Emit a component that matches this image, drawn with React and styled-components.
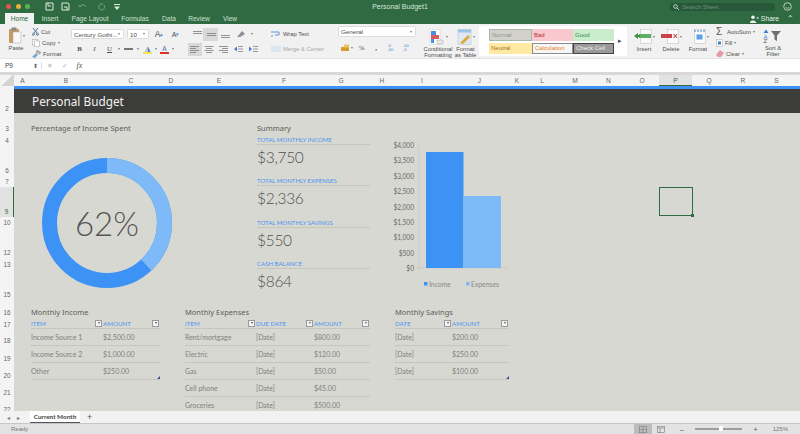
import React from "react";
import styled, { createGlobalStyle } from "styled-components";

const columns = [
  ["A", 17], ["B", 70], ["C", 60], ["D", 20], ["E", 76], ["F", 54], ["G", 60], ["H", 22], ["I", 58], ["J", 57],
  ["K", 18], ["L", 32], ["M", 34], ["N", 33], ["O", 34], ["P", 33], ["Q", 34], ["R", 34], ["S", 33],
];

const rows = [
  ["", 15], ["2", 14], ["", 7], ["3", 12], ["4", 12], ["", 18], ["6", 12], ["7", 11], ["9", 30], ["10", 11],
  ["", 18], ["12", 12], ["13", 12], ["", 18], ["15", 12], ["", 6], ["16", 12], ["17", 12], ["18", 20], ["19", 17], ["20", 17], ["21", 17], ["22", 17],
];

const summary = [
  ["TOTAL MONTHLY INCOME", "$3,750"],
  ["TOTAL MONTHLY EXPENSES", "$2,336"],
  ["TOTAL MONTHLY SAVINGS", "$550"],
  ["CASH BALANCE", "$864"],
];

const tables = [
  {
    title: "Monthly Income", left: 0, width: 129,
    cols: [["ITEM", 72], ["AMOUNT", 57]],
    data: [["Income Source 1", "$2,500.00"], ["Income Source 2", "$1,000.00"], ["Other", "$250.00"]],
    corner: true,
  },
  {
    title: "Monthly Expenses", left: 25, width: 185,
    cols: [["ITEM", 71], ["DUE DATE", 58], ["AMOUNT", 56]],
    data: [
      ["Rent/mortgage", "[Date]", "$800.00"], ["Electric", "[Date]", "$120.00"], ["Gas", "[Date]", "$50.00"],
      ["Cell phone", "[Date]", "$45.00"], ["Groceries", "[Date]", "$500.00"],
    ],
  },
  {
    title: "Monthly Savings", left: 25, width: 114,
    cols: [["DATE", 57], ["AMOUNT", 57]],
    data: [["[Date]", "$200.00"], ["[Date]", "$250.00"], ["[Date]", "$100.00"]],
    corner: true,
  },
];

const Donut = () => (
  <svg width="132" height="132" viewBox="0 0 132 132">
    <circle cx="66" cy="66" r="57.5" fill="none" stroke="#3d92f5" strokeWidth="15" />
    <circle
      cx="66" cy="66" r="57.5" fill="none" stroke="#7ebaf8" strokeWidth="15"
      strokeDasharray={`${2 * Math.PI * 57.5 * 0.38} 400`} transform="rotate(-90 66 66)"
    />
  </svg>
);

const BarChart = () => (
  <svg width="130" height="175" viewBox="0 0 130 175">
    {["$4,000", "$3,500", "$3,000", "$2,500", "$2,000", "$1,500", "$1,000", "$500", "$0"].map((t, i) => (
      <text key={t} x="24" y={14 + i * 15.4} textAnchor="end" fontSize="6.6" fontFamily="Lato, sans-serif" fill="#6a6a67">{t}</text>
    ))}
    <line x1="29" y1="11" x2="29" y2="134" stroke="#c4c4bf" strokeWidth="0.6" />
    <line x1="26" y1="134" x2="118" y2="134" stroke="#c4c4bf" strokeWidth="0.6" />
    <rect x="36" y="18" width="37.5" height="116" fill="#3d92f5" />
    <rect x="73.5" y="62" width="37.5" height="72" fill="#7ebaf8" />
    <rect x="34" y="148" width="3.5" height="3.5" fill="#3d92f5" />
    <text x="39" y="152.5" fontSize="6.8" fontFamily="Lato, sans-serif" fill="#8a8a86">Income</text>
    <rect x="76" y="148" width="3.5" height="3.5" fill="#7ebaf8" />
    <text x="81" y="152.5" fontSize="6.8" fontFamily="Lato, sans-serif" fill="#8a8a86">Expenses</text>
  </svg>
);

const Paste = () => (
  <svg width="14" height="17" viewBox="0 0 14 17">
    <rect x="1" y="2" width="10" height="14" rx="1" fill="#c59b63" />
    <rect x="3.5" y="0.5" width="5" height="3" fill="#8a8a8a" />
    <rect x="5" y="5" width="8" height="11" fill="#f8f8f8" stroke="#aaa" strokeWidth="0.5" />
  </svg>
);

const Cut = () => (
  <svg width="7" height="8" viewBox="0 0 7 8" stroke="#4c6f99" strokeWidth="1" fill="none">
    <path d="M1 0l4 5M6 0L2 5" />
    <circle cx="1.5" cy="6.3" r="1" />
    <circle cx="5.5" cy="6.3" r="1" />
  </svg>
);

const Copy = () => (
  <svg width="8" height="8" viewBox="0 0 8 8" fill="#fff" stroke="#aaa" strokeWidth="0.6">
    <rect x="0.5" y="0.5" width="5" height="5.5" />
    <rect x="2.5" y="2" width="5" height="5.5" />
  </svg>
);

const Brush = () => (
  <svg width="9" height="8" viewBox="0 0 9 8">
    <path d="M0 7l4-4 2 2-3 3z" fill="#7ba7d0" />
    <rect x="4" y="0.5" width="5" height="3" fill="#aaa" transform="rotate(30 6 2)" />
  </svg>
);

const Lines = ({ kind }) => {
  const sets = {
    top: [[1, 1, 9], [1, 3, 9]],
    mid: [[1, 3, 9], [1, 5, 9]],
    bottom: [[1, 5, 9], [1, 7, 9]],
    left: [[0, 1, 9], [0, 3, 6], [0, 5, 9], [0, 7, 6]],
    center: [[0.5, 1, 9], [2, 3, 6], [0.5, 5, 9], [2, 7, 6]],
    right: [[1, 1, 9], [4, 3, 6], [1, 5, 9], [4, 7, 6]],
  };
  return (
    <svg width="10" height="8" viewBox="0 0 10 8">
      {sets[kind].map(([x, y, w]) => <rect key={y} x={x} y={y} width={w} height="0.9" fill="#888" />)}
    </svg>
  );
};

const Indent = ({ flip }) => (
  <svg width="10" height="8" viewBox="0 0 10 8">
    <path d={flip ? "M4 4l-3-2.5v5z" : "M1 4l3-2.5v5z"} fill="#3d7fd0" />
    <rect x="5" y="1" width="5" height="1" fill="#999" />
    <rect x="5" y="3.5" width="5" height="1" fill="#999" />
    <rect x="5" y="6" width="5" height="1" fill="#999" />
  </svg>
);

const CellsIcon = ({ kind }) => (
  <svg width="18" height="15" viewBox="0 0 18 15">
    <rect x="6.5" y="0.5" width="11" height="14" fill="#fafafa" stroke="#c4c4c4" strokeWidth="0.6" />
    {kind === "insert" && <><rect x="5" y="5" width="12" height="4" fill="#62ad64" /><path d="M0 7l4-3v6z" fill="#3f9143" /><rect x="3" y="6" width="3" height="2" fill="#3f9143" /></>}
    {kind === "delete" && <><rect x="0" y="5" width="11" height="4" fill="#c9434a" /><path d="M12.5 5l3.5 4M16 5l-3.5 4" stroke="#c9434a" strokeWidth="1.1" /></>}
    {kind === "format" && <><rect x="8.5" y="5.5" width="6" height="5" fill="#5aa0ea" /><path d="M6 2h11" stroke="#3d7fd0" strokeWidth="1" strokeDasharray="2 1" /></>}
  </svg>
);

const CondIcon = () => (
  <svg width="16" height="16" viewBox="0 0 16 16">
    <rect x="1" y="0.5" width="10" height="15" fill="#fff" stroke="#ccc" strokeWidth="0.5" />
    <rect x="2" y="2" width="5" height="4" fill="#4b8fdc" />
    <rect x="2" y="6" width="8" height="4" fill="#dd5a5e" />
    <rect x="2" y="10" width="3" height="4" fill="#4b8fdc" />
    <path d="M8 11h6v4H8z" fill="#e8e8e8" stroke="#999" strokeWidth="0.4" />
  </svg>
);

const TableIcon = () => (
  <svg width="15" height="16" viewBox="0 0 15 16">
    <rect x="1" y="0.5" width="13" height="15" fill="#dfe9f3" stroke="#bbb" strokeWidth="0.5" />
    <rect x="1" y="0.5" width="13" height="3" fill="#9fc3e6" />
    <path d="M3 14l8-8 2 2-7 7z" fill="#e0a83a" />
  </svg>
);

const SortIcon = () => (
  <svg width="20" height="14" viewBox="0 0 20 14">
    <path d="M3 0.5L5.5 4h-5z" fill="#3d7fd0" />
    <text x="0.5" y="9.5" fontSize="6" fontFamily="Liberation Sans" fill="#3d7fd0">A</text>
    <text x="0.5" y="14" fontSize="6" fontFamily="Liberation Sans" fill="#555">Z</text>
    <path d="M8 2h10l-4 4.5V12l-2.5-1.5v-4z" fill="#6f6f6f" />
  </svg>
);

const App = () => (
  <>
    <GlobalStyle />
    <Window>
      <TitleBar>
        <Lights>
          <Light $c="#e8504b" />
          <Light $c="#e8b13a" />
          <Light $c="#53b848" />
        </Lights>
        <QuickIcons>
          <svg width="9" height="9" viewBox="0 0 9 9" fill="none" stroke="#dfe9e2" strokeWidth="1"><path d="M1 1h7v7H1zM3 1v3h3" /></svg>
          <svg width="9" height="9" viewBox="0 0 9 9" fill="none" stroke="#dfe9e2" strokeWidth="1"><path d="M1 1h6l1 1v6H1zM3 5h3v3" /></svg>
          <svg width="14" height="8" viewBox="0 0 14 8" fill="none" stroke="#7f9f8a" strokeWidth="1"><path d="M1 2l2 2 2-2M3 4c1-3 5-3 6 0" /></svg>
          <svg width="8" height="8" viewBox="0 0 8 8" fill="none" stroke="#7f9f8a" strokeWidth="1"><path d="M6 2a3 3 0 1 1-3-1h2" /></svg>
          <svg width="8" height="8" viewBox="0 0 8 8" fill="#dfe9e2"><path d="M1 1h6v1H1zM1 3.5h6L4 7z" /></svg>
        </QuickIcons>
        <DocTitle>Personal Budget1</DocTitle>
        <Search>
          <svg width="6" height="6" viewBox="0 0 6 6" fill="none" stroke="#cfe0d4" strokeWidth="0.9"><circle cx="2.5" cy="2.5" r="1.8" /><path d="M4 4l2 2" /></svg>
          Search Sheet
        </Search>
        <Smiley>
          <svg width="9" height="9" viewBox="0 0 9 9" fill="none" stroke="#dfe9e2" strokeWidth="0.8"><circle cx="4.5" cy="4.5" r="3.8" /><path d="M2.7 5.3c1 1.2 2.6 1.2 3.6 0" /></svg>
        </Smiley>
      </TitleBar>
      <TabRow>
        <Tab $active $w={29}>Home</Tab>
        <Tab $w={32}>Insert</Tab>
        <Tab $w={48}>Page Layout</Tab>
        <Tab $w={42}>Formulas</Tab>
        <Tab $w={26}>Data</Tab>
        <Tab $w={34}>Review</Tab>
        <Tab $w={28}>View</Tab>
        <Share>
          <svg width="9" height="8" viewBox="0 0 9 8" fill="#eef4f0"><circle cx="3" cy="2.2" r="1.8" /><path d="M0 8c0-3 6-3 6 0zM6.5 3h2.5M7.7 1.8v2.4" stroke="#eef4f0" strokeWidth="0.6" /></svg>
          Share
          <ShareCaret>⌃</ShareCaret>
        </Share>
      </TabRow>

      <Ribbon>
        <Group $w={27}>
          <BigBtn><IconLine><Paste /><Caret /></IconLine><span>Paste</span></BigBtn>
        </Group>
        <Group $w={34}>
          <Clip><Cut />Cut</Clip>
          <Clip><Copy />Copy <Caret /></Clip>
          <Clip><Brush />Format</Clip>
        </Group>
        <Group $w={112} $ml={5}>
          <Row>
            <Select $w={53}>Century Gothi...<Caret /></Select>
            <Select $w={22}>10<Caret /></Select>
            <GrowBtn $w={14} $size={8.5}>A<BlueUp>▴</BlueUp></GrowBtn>
            <GrowBtn $w={13} $size={7}>A<BlueUp>▾</BlueUp></GrowBtn>
          </Row>
          <Row $gap={2} $pl={2}>
            <ToolBtn $w={13}><b>B</b></ToolBtn>
            <ToolBtn $w={13}><i>I</i></ToolBtn>
            <ToolBtn $w={13}><u>U</u></ToolBtn>
            <Caret />
            <ToolBtn $w={13}><Swatch $c="#777" /></ToolBtn>
            <Caret />
            <ToolBtn $w={12}><AGlyph>◮</AGlyph><Swatch $c="#f5e54a" /></ToolBtn>
            <Caret />
            <ToolBtn $w={11}><AGlyph>A</AGlyph><Swatch $c="#e0312c" /></ToolBtn>
            <Caret />
          </Row>
        </Group>
        <Group $w={78} $ml={4}>
          <Row $gap={0} $pl={3}>
            <ToolBtn $w={13}><Lines kind="top" /></ToolBtn>
            <ToolBtn $w={15} $active><Lines kind="mid" /></ToolBtn>
            <ToolBtn $w={13}><Lines kind="bottom" /></ToolBtn>
            <ToolBtn $w={20}><svg width="10" height="8" viewBox="0 0 10 8"><path d="M1 7l5-6 3 3-5 3z" fill="#8e8e9a" /></svg></ToolBtn>
            <Caret />
          </Row>
          <Row $gap={0} $pl={1}>
            <ToolBtn $w={14} $active><Lines kind="left" /></ToolBtn>
            <ToolBtn $w={14}><Lines kind="center" /></ToolBtn>
            <ToolBtn $w={14}><Lines kind="right" /></ToolBtn>
            <ToolBtn $w={16}><Indent /></ToolBtn>
            <ToolBtn $w={14}><Indent flip /></ToolBtn>
          </Row>
        </Group>
        <Group $w={60} $ml={6}>
          <Clip $tall>
            <svg width="10" height="6" viewBox="0 0 10 6" fill="none" stroke="#3d7fd0" strokeWidth="0.8"><path d="M0 1h8v3H4M0 5h2" /></svg>
            Wrap Text
          </Clip>
          <Clip $tall $muted>
            <svg width="10" height="6" viewBox="0 0 10 6" fill="#dce6ee"><rect width="10" height="6" /></svg>
            Merge &amp; Center
          </Clip>
        </Group>
        <Group $w={78} $ml={7}>
          <Select $w={78} $h={11}>General<Caret /></Select>
          <Row $gap={0} $pt={3}>
            <ToolBtn $w={13}><svg width="10" height="8" viewBox="0 0 10 8"><rect x="1" y="3" width="8" height="4" fill="#d69a2d" /><rect x="4" y="0.5" width="5" height="3" fill="#edc35b" /></svg></ToolBtn>
            <Caret />
            <ToolBtn $w={17}>%</ToolBtn>
            <ToolBtn $w={12}><b>,</b></ToolBtn>
            <ToolBtn $w={17}><DecText>.0<br />.00</DecText></ToolBtn>
            <ToolBtn $w={14}><DecText>.00<br />.0</DecText></ToolBtn>
          </Row>
        </Group>
        <Group $w={57} $ml={6}>
          <Row $gap={0} $pl={1} $start>
            <BigBtn $w={30}><IconLine><CondIcon /><Caret /></IconLine><span>Conditional<br />Formatting</span></BigBtn>
            <BigBtn $w={25}><IconLine><TableIcon /><Caret /></IconLine><span>Format<br />as Table</span></BigBtn>
          </Row>
        </Group>
        <Gallery>
          <StyleGrid>
            <StyleCell $bg="#d2d2ca" $fg="#8f8f88" $bd="#a5b8a9">Normal</StyleCell>
            <StyleCell $bg="#f9c7ce" $fg="#b5323a">Bad</StyleCell>
            <StyleCell $bg="#c9eccd" $fg="#3d8a47">Good</StyleCell>
            <StyleCell $bg="#ffe9a3" $fg="#a2711a">Neutral</StyleCell>
            <StyleCell $bg="#f6f6f6" $fg="#e57f24" $bd="#8d8d8d">Calculation</StyleCell>
            <StyleCell $bg="#9a9a9a" $fg="#f2f2f2" $bd="#444">Check Cell</StyleCell>
          </StyleGrid>
          <More>▸</More>
        </Gallery>
        <Group $w={78} $ml={5}>
          <Row $gap={2} $start>
            <BigBtn $w={24}><IconLine><CellsIcon kind="insert" /><Caret /></IconLine><span>Insert</span></BigBtn>
            <BigBtn $w={26}><IconLine><CellsIcon kind="delete" /><Caret /></IconLine><span>Delete</span></BigBtn>
            <BigBtn $w={24}><IconLine><CellsIcon kind="format" /><Caret /></IconLine><span>Format</span></BigBtn>
          </Row>
        </Group>
        <Group $w={44} $ml={6}>
          <Clip><Sigma>Σ</Sigma>AutoSum <Caret /></Clip>
          <Clip><svg width="7" height="8" viewBox="0 0 7 8"><rect x="0.5" y="0.5" width="6" height="7" fill="#fff" stroke="#aaa" strokeWidth="0.5" /><rect x="2" y="2.5" width="3" height="3" fill="#3d7fd0" /></svg>Fill <Caret /></Clip>
          <Clip><svg width="8" height="7" viewBox="0 0 8 7"><path d="M0 5l4-5 4 3-3 4H2z" fill="#e59aa8" /></svg>Clear <Caret /></Clip>
        </Group>
        <Group $w={28}>
          <BigBtn $w={26}><IconLine><SortIcon /></IconLine><span>Sort &amp;<br />Filter</span></BigBtn>
        </Group>
      </Ribbon>

      <FormulaBar>
        <NameBox>P9<Stepper>⬍</Stepper></NameBox>
        <FormulaIcon>✕</FormulaIcon>
        <FormulaIcon>✓</FormulaIcon>
        <FormulaIcon $fx>fx</FormulaIcon>
        <FormulaInput />
      </FormulaBar>

      <ColumnBar>
        <Corner />
        {columns.map(([name, w]) => (
          <ColumnHead key={name} $w={w} $active={name === "P"}>{name}</ColumnHead>
        ))}
      </ColumnBar>

      <SheetArea>
        <RowHeads>
          {rows.map(([label, h], i) => (
            <RowHead key={i} $h={h} $active={label === "9"}>{label}</RowHead>
          ))}
        </RowHeads>
        <Sheet>
          <BlueRule />
          <Banner>Personal Budget</Banner>
          <TopSection>
            <DonutColumn>
              <SectionTitle>Percentage of Income Spent</SectionTitle>
              <DonutWrap>
                <Donut />
                <DonutLabel>62%</DonutLabel>
              </DonutWrap>
            </DonutColumn>
            <SummaryColumn>
              <SectionTitle>Summary</SectionTitle>
              {summary.map(([label, value]) => (
                <Metric key={label}>
                  <MetricLabel>{label}</MetricLabel>
                  <MetricValue>{value}</MetricValue>
                </Metric>
              ))}
            </SummaryColumn>
            <ChartColumn>
              <BarChart />
            </ChartColumn>
          </TopSection>
          <BottomSection>
            {tables.map((t) => (
              <TableBlock key={t.title} $left={t.left} $w={t.width}>
                <TableTitle>{t.title}</TableTitle>
                <HeadRow>
                  {t.cols.map(([c, w]) => (
                    <HeadCell key={c} $w={w}>{c}<Filter /></HeadCell>
                  ))}
                </HeadRow>
                {t.data.map((r, i) => (
                  <DataRow key={i}>
                    {r.map((v, j) => <DataCell key={j} $w={t.cols[j][1]}>{v}</DataCell>)}
                  </DataRow>
                ))}
                {t.corner && <ResizeMark />}
              </TableBlock>
            ))}
          </BottomSection>
          <SelectedCell />
        </Sheet>
      </SheetArea>

      <SheetTabs>
        <TabArrow>◂</TabArrow>
        <TabArrow>▸</TabArrow>
        <SheetTab>Current Month</SheetTab>
        <AddSheet>+</AddSheet>
      </SheetTabs>
      <StatusBar>
        <Ready>Ready</Ready>
        <ViewBtn $active>
          <svg width="8" height="7" viewBox="0 0 8 7" fill="none" stroke="#777" strokeWidth="0.5"><path d="M0 .5h8M0 3.5h8M0 6.5h8M.5 0v7M4 0v7M7.5 0v7" /></svg>
        </ViewBtn>
        <ViewBtn>
          <svg width="8" height="7" viewBox="0 0 8 7" fill="none" stroke="#777" strokeWidth="0.6"><rect x=".5" y=".5" width="7" height="6" /><path d="M.5 2h7M3 2v5" /></svg>
        </ViewBtn>
        <ZoomSign $ml={8}>–</ZoomSign>
        <Slider><Thumb /></Slider>
        <ZoomSign $ml={10}>+</ZoomSign>
        <ZoomValue>125%</ZoomValue>
      </StatusBar>
    </Window>
  </>
);

export default App;

const GlobalStyle = createGlobalStyle`
  html, body {
    margin: 0;
    height: 100%;
    overflow: hidden;
  }
  #root {
    height: 100%;
  }
`;

const Window = styled.div`
  width: 800px;
  height: 434px;
  display: flex;
  flex-direction: column;
  overflow: hidden;
  font-family: "Liberation Sans", Arial, sans-serif;
  color: #444;
`;

const TitleBar = styled.div`
  height: 13px;
  display: flex;
  align-items: center;
  position: relative;
  background: #2f6a42;
  padding-left: 6px;
`;

const Lights = styled.div`
  display: flex;
  gap: 4.5px;
`;

const Light = styled.span`
  width: 5px;
  height: 5px;
  border-radius: 50%;
  background: ${(p) => p.$c};
`;

const QuickIcons = styled.div`
  display: flex;
  align-items: center;
  gap: 7px;
  margin-left: 15px;
`;

const DocTitle = styled.div`
  position: absolute;
  left: 0;
  right: 0;
  text-align: center;
  font-size: 7px;
  color: #d8e6dc;
`;

const Search = styled.div`
  margin-left: auto;
  width: 105px;
  height: 8px;
  display: flex;
  align-items: center;
  gap: 3px;
  padding-left: 3px;
  box-sizing: border-box;
  background: #28583a;
  border-radius: 2px;
  font-size: 6px;
  color: #6d9379;
`;

const Smiley = styled.div`
  width: 25px;
  display: flex;
  justify-content: center;
`;

const TabRow = styled.div`
  height: 11px;
  display: flex;
  align-items: flex-end;
  background: #2f6a42;
  padding-left: 5px;
`;

const Tab = styled.div`
  width: ${(p) => p.$w}px;
  height: 11px;
  display: flex;
  align-items: center;
  justify-content: center;
  font-size: 6.6px;
  color: ${(p) => (p.$active ? "#2f6a42" : "#cfe0d4")};
  background: ${(p) => (p.$active ? "#f1f1f1" : "transparent")};
`;

const Share = styled.div`
  margin-left: auto;
  display: flex;
  align-items: center;
  gap: 2px;
  height: 11px;
  font-size: 6.8px;
  color: #e8f0ea;
  padding-right: 6px;
`;

const ShareCaret = styled.span`
  margin-left: 6px;
  font-size: 8px;
  line-height: 12px;
`;

const Ribbon = styled.div`
  height: 34px;
  display: flex;
  align-items: flex-start;
  background: #f1f1f1;
  padding: 2px 0 0 5px;
  box-sizing: border-box;
  font-size: 6px;
  color: #4d4d4d;
`;

const Group = styled.div`
  width: ${(p) => p.$w}px;
  margin-left: ${(p) => p.$ml || 0}px;
  flex-shrink: 0;
  display: flex;
  flex-direction: column;
`;

const Row = styled.div`
  display: flex;
  align-items: ${(p) => (p.$start ? "flex-start" : "center")};
  gap: ${(p) => p.$gap ?? 3}px;
  padding-left: ${(p) => p.$pl || 0}px;
  padding-top: ${(p) => p.$pt || 0}px;
  height: ${(p) => (p.$pt ? "auto" : "14px")};
  margin-top: 1px;
`;

const BigBtn = styled.div`
  width: ${(p) => p.$w || 22}px;
  display: flex;
  flex-direction: column;
  align-items: center;
  margin-top: 1px;
  gap: 1px;
  line-height: 6.2px;
  text-align: center;
  font-size: 5.8px;
  white-space: nowrap;
`;

const IconLine = styled.div`
  height: 17px;
  display: flex;
  align-items: center;
  gap: 1px;
`;

const Clip = styled.div`
  height: ${(p) => (p.$tall ? 15 : 11)}px;
  display: flex;
  align-items: center;
  gap: 2px;
  white-space: nowrap;
  font-size: 5.8px;
  color: ${(p) => (p.$muted ? "#a5a5a5" : "#4d4d4d")};
`;

const Caret = styled.span`
  width: 0;
  height: 0;
  border-left: 1.5px solid transparent;
  border-right: 1.5px solid transparent;
  border-top: 2px solid #777;
  flex-shrink: 0;
`;

const Select = styled.div`
  width: ${(p) => p.$w}px;
  height: ${(p) => p.$h || 10}px;
  display: flex;
  align-items: center;
  justify-content: space-between;
  box-sizing: border-box;
  padding: 0 3px 0 2px;
  background: #fff;
  border: 0.5px solid #dcdcdc;
  border-radius: 1.5px;
  font-size: 6.2px;
  white-space: nowrap;
  overflow: hidden;
`;

const ToolBtn = styled.div`
  width: ${(p) => p.$w}px;
  height: 13px;
  display: flex;
  flex-direction: column;
  align-items: center;
  justify-content: center;
  font-size: 7px;
  font-family: "Liberation Serif", serif;
  background: ${(p) => (p.$active ? "#d8d8d8" : "transparent")};
`;

const GrowBtn = styled.div`
  width: ${(p) => p.$w}px;
  display: flex;
  align-items: center;
  justify-content: center;
  font-size: ${(p) => p.$size}px;
`;

const BlueUp = styled.span`
  font-size: 5px;
  color: #3d7fd0;
`;

const AGlyph = styled.span`
  font-size: 6.5px;
  line-height: 7px;
  font-family: "Liberation Sans", sans-serif;
  color: #3d6fb0;
`;

const Swatch = styled.span`
  width: 9px;
  height: 2px;
  background: ${(p) => p.$c};
`;

const DecText = styled.span`
  font-size: 4px;
  line-height: 4px;
  font-family: "Liberation Sans", sans-serif;
  color: #3d7fd0;
`;

const Gallery = styled.div`
  width: 148px;
  height: 30px;
  flex-shrink: 0;
  display: flex;
  align-items: center;
  background: #fff;
  padding-left: 10px;
  box-sizing: border-box;
`;

const StyleGrid = styled.div`
  display: grid;
  grid-template-columns: 43px 41px 41px;
  grid-template-rows: 12px 11px;
  row-gap: 2px;
`;

const StyleCell = styled.div`
  display: flex;
  align-items: center;
  padding-left: 2px;
  font-size: 6px;
  background: ${(p) => p.$bg};
  color: ${(p) => p.$fg};
  border: ${(p) => (p.$bd ? `1px solid ${p.$bd}` : "none")};
  box-sizing: border-box;
`;

const More = styled.div`
  margin-left: 4px;
  font-size: 7px;
`;

const Sigma = styled.span`
  font-size: 10px;
  width: 9px;
  line-height: 9px;
  color: #555;
`;

const FormulaBar = styled.div`
  height: 14px;
  display: flex;
  align-items: center;
  background: #fff;
  border-top: 1px solid #e3e3e3;
  box-sizing: border-box;
`;

const NameBox = styled.div`
  width: 42px;
  display: flex;
  justify-content: space-between;
  padding: 0 3px 0 5px;
  box-sizing: border-box;
  font-size: 6.4px;
  border-right: 1px solid #ddd;
`;

const Stepper = styled.span`
  font-size: 6px;
  color: #666;
`;

const FormulaIcon = styled.span`
  width: 15px;
  text-align: center;
  font-size: ${(p) => (p.$fx ? 8 : 6.5)}px;
  font-family: ${(p) => (p.$fx ? '"Liberation Serif", serif' : "inherit")};
  font-style: ${(p) => (p.$fx ? "italic" : "normal")};
  color: ${(p) => (p.$fx ? "#555" : "#b5b5b5")};
`;

const FormulaInput = styled.div`
  flex: 1;
`;

const ColumnBar = styled.div`
  height: 14px;
  display: flex;
  background: #f4f4f4;
  border-top: 3px solid #d8d8d8;
  box-sizing: border-box;
  font-size: 6.6px;
  color: #666;
`;

const Corner = styled.div`
  width: 14px;
  flex-shrink: 0;
  background: linear-gradient(135deg, #f4f4f4 50%, #d4d4d4 50%);
`;

const ColumnHead = styled.div`
  width: ${(p) => p.$w}px;
  flex-shrink: 0;
  display: flex;
  align-items: center;
  justify-content: center;
  box-sizing: border-box;
  background: ${(p) => (p.$active ? "#e2e2e2" : "transparent")};
  border-bottom: ${(p) => (p.$active ? "1px solid #2f6a42" : "none")};
  color: ${(p) => (p.$active ? "#2f6a42" : "inherit")};
`;

const SheetArea = styled.div`
  flex: 1;
  min-height: 0;
  display: flex;
  overflow: hidden;
`;

const RowHeads = styled.div`
  width: 14px;
  flex-shrink: 0;
  background: #f4f4f4;
`;

const RowHead = styled.div`
  height: ${(p) => p.$h}px;
  display: flex;
  align-items: ${(p) => (p.$active ? "flex-end" : "center")};
  justify-content: center;
  box-sizing: border-box;
  padding-bottom: ${(p) => (p.$active ? 2 : 0)}px;
  font-size: 6.4px;
  color: ${(p) => (p.$active ? "#2f6a42" : "#666")};
  background: ${(p) => (p.$active ? "#e2e2e2" : "transparent")};
  border-right: ${(p) => (p.$active ? "1px solid #2f6a42" : "none")};
`;

const Sheet = styled.div`
  flex: 1;
  position: relative;
  background: #d8d8d3;
  overflow: hidden;
`;

const BlueRule = styled.div`
  height: 3px;
  background: #3d92f5;
`;

const Banner = styled.div`
  height: 24px;
  display: flex;
  align-items: center;
  padding-left: 18px;
  background: #3c3c3a;
  color: #f3f3f3;
  font-family: "Noto Sans", sans-serif;
  font-size: 11.8px;
`;

const TopSection = styled.div`
  height: 193px;
  display: grid;
  grid-template-columns: 226px 133px 1fr;
  padding: 9px 0 0 17px;
  box-sizing: border-box;
`;

const DonutColumn = styled.div`
  display: flex;
  flex-direction: column;
`;

const SectionTitle = styled.div`
  font-family: "Noto Sans", sans-serif;
  font-size: 7.5px;
  line-height: 12px;
  color: #5c5c58;
`;

const DonutWrap = styled.div`
  position: relative;
  width: 132px;
  height: 132px;
  margin: 23px 0 0 10px;
`;

const DonutLabel = styled.div`
  position: absolute;
  inset: 0;
  display: flex;
  align-items: center;
  justify-content: center;
  font-family: Lato, sans-serif;
  font-weight: 300;
  font-size: 33px;
  color: #555553;
`;

const SummaryColumn = styled.div`
  display: flex;
  flex-direction: column;
`;

const Metric = styled.div`
  height: 41.3px;
  width: 113px;
`;

const MetricLabel = styled.div`
  height: 10px;
  line-height: 12px;
  font-family: Lato, sans-serif;
  font-size: 6.05px;
  color: #4a94ee;
  border-bottom: 1px solid #c6c6bd;
`;

const MetricValue = styled.div`
  padding-top: 1px;
  font-family: Lato, sans-serif;
  font-weight: 300;
  font-size: 15.5px;
  letter-spacing: -0.3px;
  line-height: 22px;
  color: #50504e;
`;

const ChartColumn = styled.div`
  margin-top: 12px;
`;

const BottomSection = styled.div`
  display: flex;
  padding-left: 17px;
`;

const TableBlock = styled.div`
  position: relative;
  width: ${(p) => p.$w}px;
  margin-left: ${(p) => p.$left}px;
`;

const TableTitle = styled.div`
  font-family: "Noto Sans", sans-serif;
  font-size: 7.5px;
  line-height: 12px;
  color: #5c5c58;
`;

const HeadRow = styled.div`
  display: flex;
  height: 10px;
  border-bottom: 1px solid #c6c6bd;
`;

const HeadCell = styled.div`
  width: ${(p) => p.$w}px;
  display: flex;
  align-items: center;
  justify-content: space-between;
  box-sizing: border-box;
  padding-right: 1px;
  font-family: Lato, sans-serif;
  font-size: 6.2px;
  color: #4a94ee;
`;

const Filter = styled.span`
  width: 7px;
  height: 7px;
  flex-shrink: 0;
  display: flex;
  align-items: center;
  justify-content: center;
  box-sizing: border-box;
  background: #f4f4f4;
  border: 0.5px solid #9a9a9a;

  &::after {
    content: "";
    border-left: 1.5px solid transparent;
    border-right: 1.5px solid transparent;
    border-top: 2px solid #555;
  }
`;

const DataRow = styled.div`
  display: flex;
  height: 17px;
  box-sizing: border-box;
  border-bottom: 1px solid #c6c6bd;
`;

const DataCell = styled.div`
  width: ${(p) => p.$w}px;
  display: flex;
  align-items: center;
  font-family: Lato, sans-serif;
  font-size: 7px;
  color: #80807c;
`;

const ResizeMark = styled.span`
  position: absolute;
  right: 0;
  top: 70px;
  border-left: 3px solid transparent;
  border-bottom: 3px solid #35509a;
`;

const SelectedCell = styled.div`
  position: absolute;
  left: 645px;
  top: 101px;
  width: 34px;
  height: 29px;
  box-sizing: border-box;
  border: 1px solid #2f6a42;

  &::after {
    content: "";
    position: absolute;
    right: -2px;
    bottom: -2px;
    width: 3px;
    height: 3px;
    background: #2f6a42;
  }
`;

const SheetTabs = styled.div`
  height: 12px;
  display: flex;
  align-items: center;
  background: #f2f2f2;
  padding-left: 7px;
  flex-shrink: 0;
`;

const TabArrow = styled.span`
  width: 10px;
  font-size: 6px;
  color: #777;
`;

const SheetTab = styled.div`
  width: 50px;
  height: 12px;
  margin-left: 3px;
  display: flex;
  align-items: center;
  justify-content: center;
  box-sizing: border-box;
  background: #fff;
  border-bottom: 1px solid #555;
  font-family: Lato, sans-serif;
  font-size: 6.4px;
  font-weight: 700;
  color: #444;
`;

const AddSheet = styled.span`
  margin-left: 7px;
  font-size: 9px;
  color: #555;
`;

const StatusBar = styled.div`
  height: 11px;
  display: flex;
  align-items: center;
  flex-shrink: 0;
  background: #e3e3e3;
  border-top: 1px solid #c6c6c6;
  box-sizing: border-box;
  font-size: 6px;
  color: #777;
`;

const Ready = styled.span`
  margin-left: 11px;
  margin-right: auto;
`;

const ViewBtn = styled.span`
  width: 18px;
  height: 10px;
  display: flex;
  align-items: center;
  justify-content: center;
  background: ${(p) => (p.$active ? "#bdbdbd" : "transparent")};
`;

const ZoomSign = styled.span`
  width: 8px;
  margin-left: ${(p) => p.$ml}px;
  font-size: 7px;
  text-align: center;
  color: #555;
`;

const Slider = styled.div`
  position: relative;
  width: 47px;
  height: 1.5px;
  margin-left: 9px;
  background: #9e9e9e;
`;

const Thumb = styled.span`
  position: absolute;
  left: 24px;
  top: -2px;
  width: 4px;
  height: 5px;
  border-radius: 1px;
  background: #fff;
`;

const ZoomValue = styled.span`
  margin: 0 12px 0 13px;
`;
